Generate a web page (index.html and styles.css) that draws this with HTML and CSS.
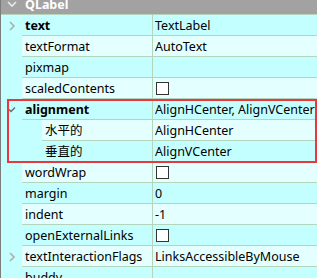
FILE: index.html
```html
<!DOCTYPE html>
<html lang="zh-CN">
<head>
    <meta charset="UTF-8">
    <title>属性编辑器</title>
    <link rel="stylesheet" href="styles.css">
</head>
<body>
    <div class="browser">
        <div class="group-header">
            <svg class="group-arrow" width="10" height="8" viewBox="0 0 10 8"><polyline points="1,1 5,5 9,1" fill="none" stroke="#e8e8e8" stroke-width="1.6"/></svg>
            <span class="group-title">QLabel</span>
        </div>

        <div class="row">
            <div class="branch"><svg width="8" height="10" viewBox="0 0 8 10"><polyline points="2,1 6,5 2,9" fill="none" stroke="#a6b0b0" stroke-width="1.6"/></svg></div>
            <div class="name bold">text</div>
            <div class="value">TextLabel</div>
        </div>
        <div class="row light">
            <div class="branch"></div>
            <div class="name">textFormat</div>
            <div class="value">AutoText</div>
        </div>
        <div class="row">
            <div class="branch"></div>
            <div class="name">pixmap</div>
            <div class="value"></div>
        </div>
        <div class="row light">
            <div class="branch"></div>
            <div class="name">scaledContents</div>
            <div class="value"><span class="check"></span></div>
        </div>
        <div class="row">
            <div class="branch"><svg width="8" height="8" viewBox="0 0 8 8"><polyline points="1,3.5 3,5.5 7,1.5" fill="none" stroke="#6a6e6e" stroke-width="1.5"/></svg></div>
            <div class="name bold">alignment</div>
            <div class="value">AlignHCenter, AlignVCenter</div>
        </div>
        <div class="row light child">
            <div class="branch"></div>
            <div class="name">水平的</div>
            <div class="value">AlignHCenter</div>
        </div>
        <div class="row child">
            <div class="branch"></div>
            <div class="name">垂直的</div>
            <div class="value">AlignVCenter</div>
        </div>
        <div class="row light">
            <div class="branch"></div>
            <div class="name">wordWrap</div>
            <div class="value"><span class="check"></span></div>
        </div>
        <div class="row">
            <div class="branch"></div>
            <div class="name">margin</div>
            <div class="value">0</div>
        </div>
        <div class="row light">
            <div class="branch"></div>
            <div class="name">indent</div>
            <div class="value">-1</div>
        </div>
        <div class="row">
            <div class="branch"></div>
            <div class="name">openExternalLinks</div>
            <div class="value"><span class="check"></span></div>
        </div>
        <div class="row light">
            <div class="branch"><svg width="8" height="10" viewBox="0 0 8 10"><polyline points="2,1 6,5 2,9" fill="none" stroke="#a6b0b0" stroke-width="1.6"/></svg></div>
            <div class="name">textInteractionFlags</div>
            <div class="value">LinksAccessibleByMouse</div>
        </div>
        <div class="row">
            <div class="branch"></div>
            <div class="name">buddy</div>
            <div class="value"></div>
        </div>

        <div class="highlight"></div>
    </div>
</body>
</html>
```

FILE: styles.css
```css
body {
    margin: 0;
    font-family: "Noto Sans", "Noto Sans CJK SC", sans-serif;
    font-size: 12.5px;
    color: #000;
    overflow: hidden;
}

.browser {
    position: relative;
    width: 316px;
    height: 278px;
    border-left: 1px solid #7c7c7c;
    background: #c4ffff;
    overflow: hidden;
}

.group-header {
    display: flex;
    align-items: flex-start;
    height: 14px;
    background: #a2a2a2;
    border-bottom: 1px solid #b4d4bc;
    overflow: hidden;
}

.group-arrow {
    margin: 1px 0 0 6px;
}

.group-title {
    margin: -5px 0 0 8px;
    line-height: 20px;
    font-weight: bold;
    color: #fff;
}

.row {
    display: flex;
    height: 21px;
    line-height: 20px;
}

.branch {
    width: 21px;
    flex: none;
    display: flex;
    align-items: center;
    justify-content: center;
    background: #c4ffff;
}

.child .branch {
    width: 41px;
}

.name,
.value {
    box-sizing: border-box;
    height: 21px;
    padding-top: 1px;
    border-bottom: 1px solid #b4d4bc;
    background: #c4ffff;
    white-space: nowrap;
    overflow: hidden;
}

.light .name,
.light .value {
    background: #e4ffff;
}

.name {
    width: 131px;
    flex: none;
    padding-left: 3px;
    border-right: 1px solid #b4d4bc;
}

.child .name {
    width: 111px;
}

.value {
    flex: 1;
    padding-left: 2px;
    display: flex;
    align-items: center;
}

.bold {
    font-weight: bold;
}

.check {
    box-sizing: border-box;
    width: 13px;
    height: 13px;
    margin-left: 1px;
    border: 1px solid #333;
    background: #fff;
}

.highlight {
    position: absolute;
    left: 6px;
    top: 99px;
    width: 310px;
    height: 64px;
    box-sizing: border-box;
    border: 2px solid #e8383d;
}
```
